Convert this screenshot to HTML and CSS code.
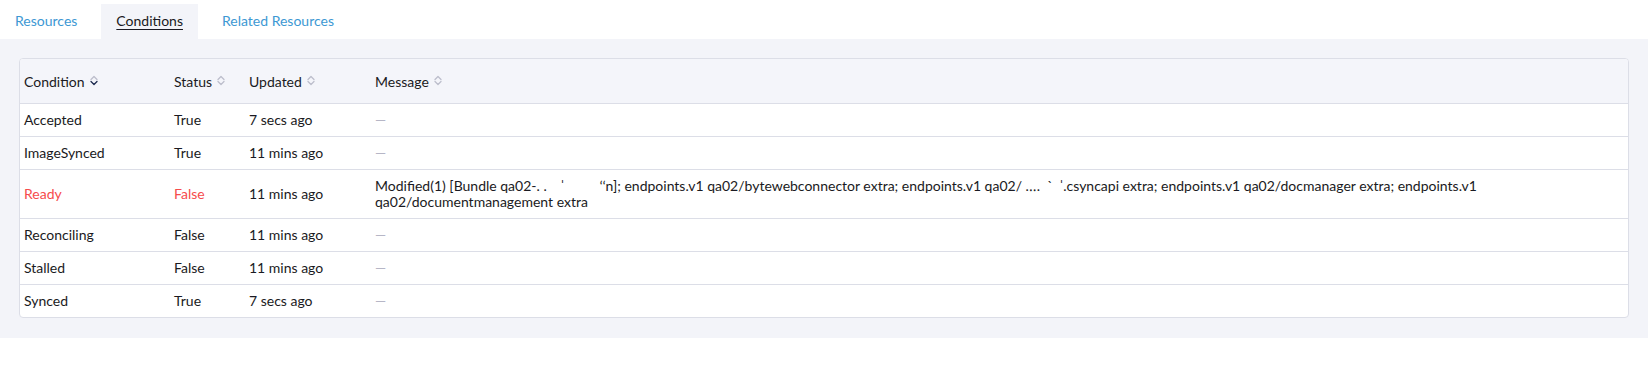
FILE: index.html
```html
<!DOCTYPE html>
<html>
<head>
<meta charset="utf-8">
<link rel="stylesheet" href="styles.css">
</head>
<body>
<nav class="tabs">
  <a class="tab">Resources</a>
  <a class="tab active">Conditions</a>
  <a class="tab">Related Resources</a>
</nav>
<section class="panel">
  <div class="card">
    <div class="grid">
      <div class="th">Condition <svg class="sort" viewBox="0 0 8 11" width="8" height="11"><path class="up" d="M1 4.5 L4 1.5 L7 4.5"/><path class="down on" d="M1 6.5 L4 9.5 L7 6.5"/></svg></div>
      <div class="th">Status <svg class="sort" viewBox="0 0 8 11" width="8" height="11"><path class="up" d="M1 4.5 L4 1.5 L7 4.5"/><path class="down" d="M1 6.5 L4 9.5 L7 6.5"/></svg></div>
      <div class="th">Updated <svg class="sort" viewBox="0 0 8 11" width="8" height="11"><path class="up" d="M1 4.5 L4 1.5 L7 4.5"/><path class="down" d="M1 6.5 L4 9.5 L7 6.5"/></svg></div>
      <div class="th">Message <svg class="sort" viewBox="0 0 8 11" width="8" height="11"><path class="up" d="M1 4.5 L4 1.5 L7 4.5"/><path class="down" d="M1 6.5 L4 9.5 L7 6.5"/></svg></div>

      <div class="td">Accepted</div>
      <div class="td">True</div>
      <div class="td">7 secs ago</div>
      <div class="td msg"><span class="dash">—</span></div>

      <div class="td">ImageSynced</div>
      <div class="td">True</div>
      <div class="td">11 mins ago</div>
      <div class="td msg"><span class="dash">—</span></div>

      <div class="td err">Ready</div>
      <div class="td err">False</div>
      <div class="td">11 mins ago</div>
      <div class="td msg">Modified(1) [Bundle qa02-. .&emsp;&nbsp;ˈ&emsp;&emsp;&nbsp;&nbsp;&nbsp;&nbsp;ʻʻn]; endpoints.v1 qa02/bytewebconnector extra; endpoints.v1 qa02/&nbsp;.‥.&ensp;ˋ&ensp;ˈ.csyncapi extra; endpoints.v1 qa02/docmanager extra; endpoints.v1 qa02/documentmanagement extra</div>

      <div class="td">Reconciling</div>
      <div class="td">False</div>
      <div class="td">11 mins ago</div>
      <div class="td msg"><span class="dash">—</span></div>

      <div class="td">Stalled</div>
      <div class="td">False</div>
      <div class="td">11 mins ago</div>
      <div class="td msg"><span class="dash">—</span></div>

      <div class="td last">Synced</div>
      <div class="td last">True</div>
      <div class="td last">7 secs ago</div>
      <div class="td msg last"><span class="dash">—</span></div>
    </div>
  </div>
</section>
</body>
</html>
```

FILE: styles.css
```css
* { box-sizing: border-box; }
html, body { margin: 0; background: #fff; }
body {
  font-family: Lato, "Open Sans", "Liberation Sans", sans-serif;
  font-size: 14px;
  color: #1a1a22;
}
.tabs {
  display: flex;
  gap: 9px;
  height: 39px;
  padding-top: 4px;
}
.tab {
  display: flex;
  align-items: center;
  padding: 0 15px 2px;
  color: #3d98d3;
  cursor: pointer;
}
.tab.active {
  background: #f3f4f9;
  color: #1a1a22;
  text-decoration: underline;
  text-underline-offset: 3px;
}
.panel {
  background: #f3f4f9;
  padding: 19px 19px 20px;
}
.card {
  background: #fff;
  border: 1px solid #dcdee7;
  border-radius: 4px;
  overflow: hidden;
}
.grid {
  display: grid;
  grid-template-columns: 150px 75px 126px 1fr;
}
.th {
  display: flex;
  align-items: center;
  height: 45px;
  padding: 0 4px;
  background: #f4f5fa;
  border-bottom: 1px solid #dcdee7;
  white-space: nowrap;
}
.sort { margin-left: 5px; margin-top: -1px; fill: none; stroke-width: 1.3; stroke-linecap: round; stroke-linejoin: round; }
.sort .up, .sort .down { stroke: #bcbecb; }
.sort .on { stroke: #1d2b4f; }
.td {
  display: flex;
  align-items: center;
  min-height: 33px;
  padding: 8px 4px;
  line-height: 16px;
  border-bottom: 1px solid #dcdee7;
}
.td.last { border-bottom: none; min-height: 31px; }
.td.msg { display: block; padding-right: 80px; }
.err { color: #f64c4c; }
.dash { color: #b6b6c6; }
```
